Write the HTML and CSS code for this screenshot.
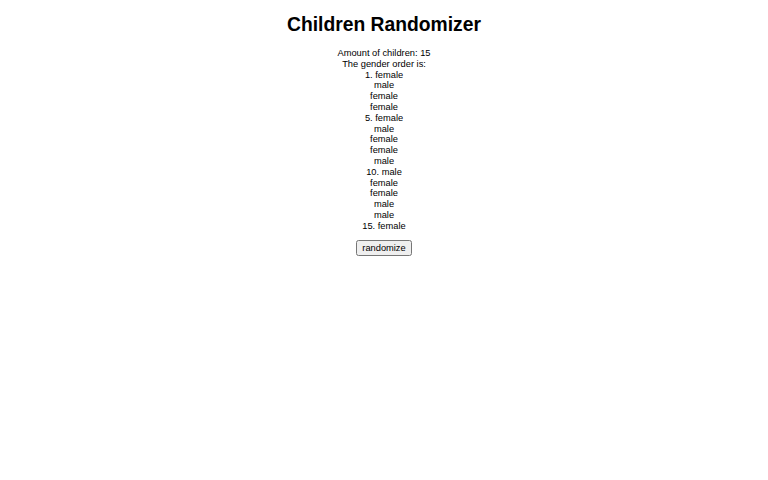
FILE: index.html
```html
<!DOCTYPE html>
<html>
<head>
    <title>Children Randomizer</title>
    <link rel="stylesheet" href="styles.css">
</head>
<body>
    <h1>Children Randomizer</h1>
    <div class="output">
        <div>Amount of children: 15</div>
        <div>The gender order is:</div>
        <div id="list">
            <div>1. female</div>
            <div>male</div>
            <div>female</div>
            <div>female</div>
            <div>5. female</div>
            <div>male</div>
            <div>female</div>
            <div>female</div>
            <div>male</div>
            <div>10. male</div>
            <div>female</div>
            <div>female</div>
            <div>male</div>
            <div>male</div>
            <div>15. female</div>
        </div>
    </div>
    <button class="btn">randomize</button>
</body>
</html>
```

FILE: styles.css
```css
body { font-family: "Liberation Sans", Arial, sans-serif; margin: 8px; text-align: center; color: #000; background: #fff; }
h1 { font-size: 19.3px; margin: 6px 0 12px; }
.output { font-size: 9.3px; line-height: 10.8px; }
.btn { font-family: "Liberation Sans", Arial, sans-serif; font-size: 9.3px; line-height: 10px; margin-top: 8px; padding: 1px 4px; }
```
